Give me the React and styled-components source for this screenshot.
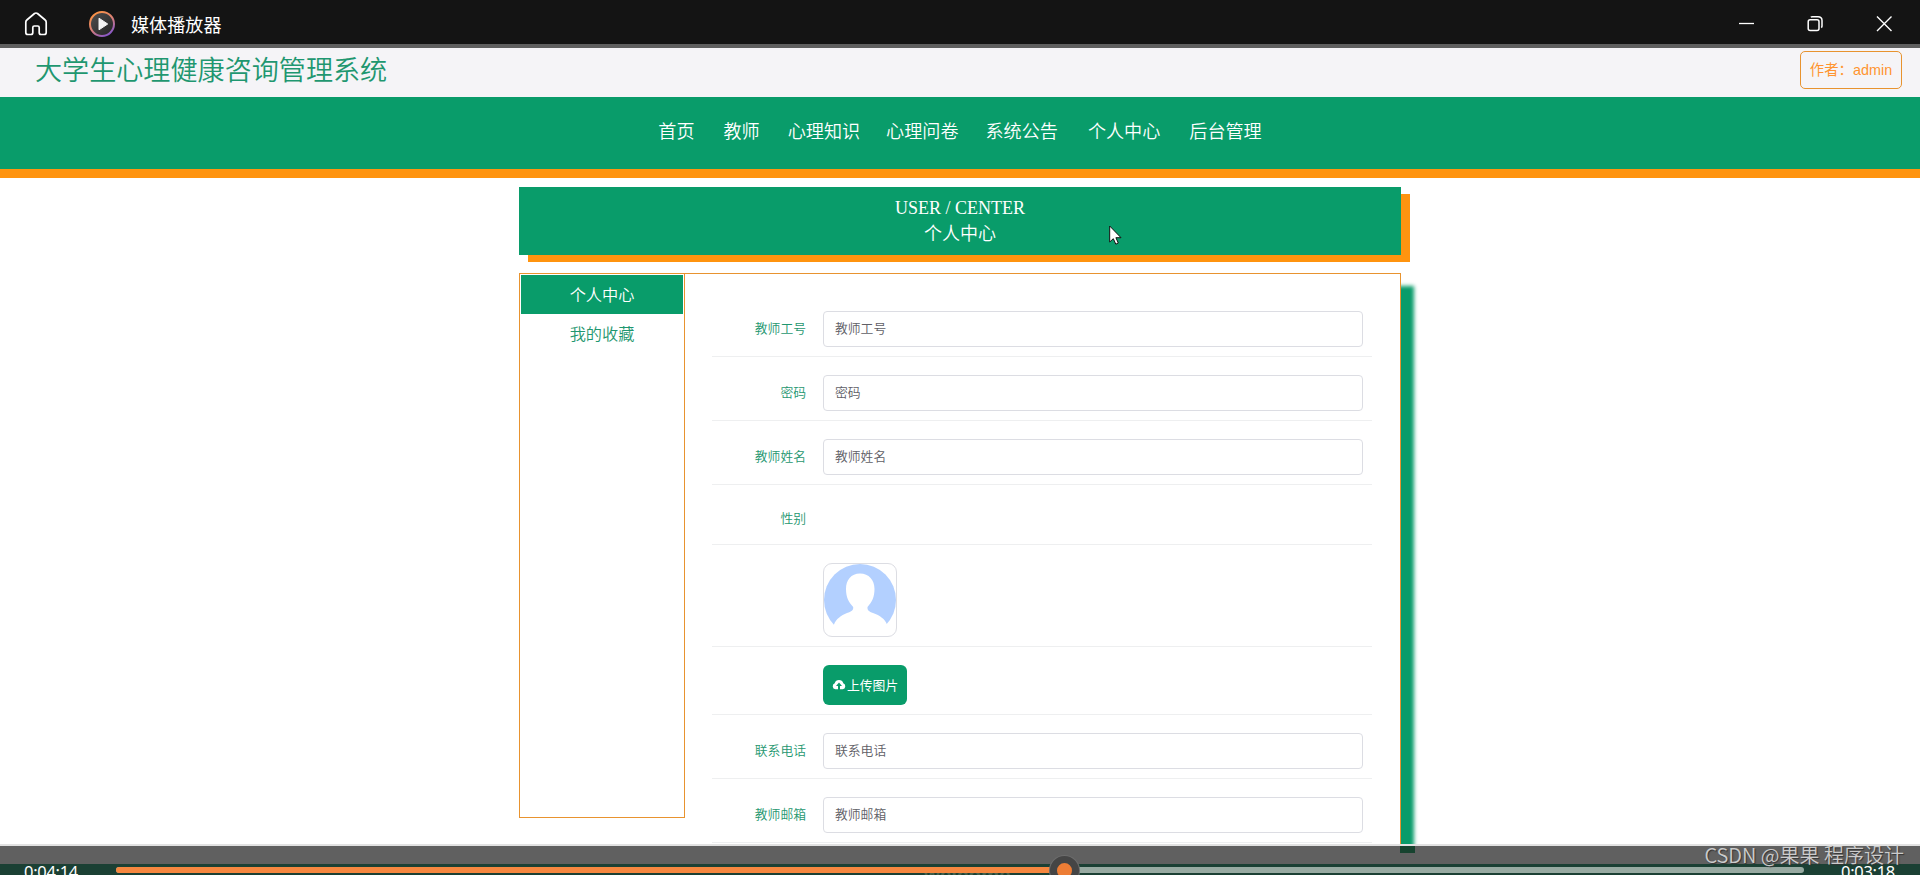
import React from 'react';
import styled, { createGlobalStyle } from 'styled-components';

const GREEN = '#099c6a';
const ORANGE = '#ff940f';
const LINE = '#e8932f';
const CJK = "'Noto Sans CJK SC', sans-serif";

const GlobalStyle = createGlobalStyle`
  * { box-sizing: border-box; }
  body {
    margin: 0;
    overflow: hidden;
    background: #fff;
    font-family: 'Liberation Sans', 'Noto Sans CJK SC', sans-serif;
  }
`;

const Screen = styled.div`
  position: relative;
  display: flex;
  flex-direction: column;
  height: 875px;
  overflow: hidden;
`;

const TitleBar = styled.header`
  flex: none;
  display: flex;
  align-items: center;
  height: 48px;
  padding: 0 16px 0 24px;
  background: #141414;
  border-bottom: 4px solid #5f5f5f;
  color: #fff;
`;

const AppName = styled.span`
  margin-left: 16px;
  padding-top: 3px;
  font: 400 18px/24px ${CJK};
  letter-spacing: 0.1px;
`;

const PlayerLogo = styled.svg`
  margin: 4px 0 0 41px;
`;

const HomeIcon = styled.svg`
  margin-top: 3px;
`;

const WindowControls = styled.div`
  display: flex;
  gap: 51px;
  margin: 3px 11px 0 auto;
`;

const SiteHeader = styled.div`
  flex: none;
  display: flex;
  justify-content: space-between;
  align-items: flex-start;
  height: 49px;
  padding: 3px 18px 0 35px;
  background: #f5f4f7;
`;

const SiteTitle = styled.h1`
  margin: 0;
  color: #1f9770;
  font: 350 27.1px/36px ${CJK};
`;

const Author = styled.div`
  width: 102px;
  height: 38px;
  border: 1px solid ${LINE};
  border-radius: 5px;
  color: #ff9430;
  font-size: 14.4px;
  line-height: 37px;
  text-align: center;
  white-space: nowrap;
`;

const Nav = styled.nav`
  flex: none;
  display: flex;
  justify-content: center;
  height: 81px;
  border-bottom: 9px solid ${ORANGE};
  background: ${GREEN};
`;

const NavItem = styled.a`
  margin-left: ${(p) => p.$gap}px;
  color: #fff;
  font: 350 18.1px/66px ${CJK};
`;

const Main = styled.main`
  flex: none;
  width: 882px;
  margin: 9px auto 0;
`;

const Banner = styled.div`
  height: 68px;
  padding-top: 9px;
  background: ${GREEN};
  box-shadow: 9px 7px 0 ${ORANGE};
  color: #fff;
  font: 18px/24px 'Liberation Serif', 'Noto Sans CJK SC', serif;
  text-align: center;
`;

const BannerLine = styled.div`
  font-weight: ${(p) => (p.$light ? 350 : 400)};
  font-family: ${(p) => (p.$light ? CJK : 'inherit')};
`;

const Panel = styled.section`
  display: flex;
  align-items: flex-start;
  height: 575px;
  margin-top: 18px;
  border: 1px solid ${LINE};
  border-left: 0;
  box-shadow: 13px 13px 4px ${GREEN};
  background: #fff;
`;

const Sidebar = styled.aside`
  width: 166px;
  height: 545px;
  margin-top: -1px;
  padding: 1px;
  border: 1px solid ${LINE};
`;

const SideItem = styled.div`
  height: 39px;
  background: ${(p) => (p.$active ? GREEN : 'transparent')};
  color: ${(p) => (p.$active ? '#fff' : '#1f9770')};
  font: 350 16.2px/38px ${CJK};
  text-align: center;
`;

const Form = styled.form`
  width: 660px;
  margin: 19px 0 0 27px;
`;

const Row = styled.div`
  display: flex;
  padding: 18px 0 9px;
  border-bottom: 1px solid #eeeff0;
`;

const Label = styled.label`
  width: 94px;
  height: 32px;
  margin-right: 17px;
  color: #1f9770;
  font: 350 12.8px/${(p) => (p.$raised ? 29 : 33)}px ${CJK};
  text-align: right;
`;

const Input = styled.input`
  width: 540px;
  height: 36px;
  padding: 0 11px 3px;
  border: 1px solid #dcdde3;
  border-radius: 4px;
  outline: none;
  font: 350 12.8px ${CJK};
  &::placeholder { color: #606066; opacity: 1; }
`;

const Avatar = styled.div`
  width: 74px;
  height: 74px;
  border: 1px solid #dcdde3;
  border-radius: 9px;
  overflow: hidden;
`;

const Upload = styled.button`
  display: flex;
  align-items: center;
  gap: 1px;
  width: 84px;
  height: 40px;
  padding: 0 0 2px 9px;
  border: 0;
  border-radius: 6px;
  background: ${GREEN};
  color: #fff;
  font: 400 12.8px ${CJK};
  white-space: nowrap;
`;

const Player = styled.footer`
  position: absolute;
  left: 0;
  right: 0;
  bottom: 0;
  height: 31px;
  border-top: 2px solid #e2e2e2;
  background: linear-gradient(#606060 18px, #1b4034 18px);
  overflow: hidden;
`;

const ShadowUnderlay = styled.div`
  position: absolute;
  left: 1400px;
  top: 0;
  width: 15px;
  height: 7px;
  background: #17432f;
`;

const Controls = styled.div`
  position: relative;
  display: flex;
  align-items: flex-start;
  padding: 14px 24px 0;
`;

const Time = styled.span`
  width: ${(p) => p.$width}px;
  color: #fff;
  font: 400 16.5px/24px 'Noto Sans', sans-serif;
  letter-spacing: -0.3px;
  white-space: nowrap;
`;

const Track = styled.div`
  position: relative;
  width: 1688px;
  height: 6px;
  margin: 7px 37px 0 0;
  border-radius: 3px;
  background: #98aaa2;
`;

const Played = styled.div`
  width: 948px;
  height: 6px;
  border-radius: 3px 0 0 3px;
  background: #f6873f;
`;

const Knob = styled.div`
  position: absolute;
  left: 933.5px;
  top: -11.5px;
  width: 29px;
  height: 29px;
  border: 7px solid #454545;
  border-radius: 50%;
  background: #ed7d35;
  box-shadow: 0 0 0 1px #6c6c6c;
`;

const Welcome = styled.div`
  position: absolute;
  left: 924px;
  top: 17px;
  color: #46604c;
  font: 700 20.5px/24px 'Liberation Sans', sans-serif;
`;

const Watermark = styled.div`
  position: absolute;
  right: 16px;
  top: 841px;
  color: #cbcbcb;
  font: 350 20px/28px ${CJK};
  text-shadow: 1px 1px 1px #333;
  white-space: nowrap;
`;

const Pointer = styled.svg`
  position: absolute;
  left: 1109px;
  top: 225px;
`;

const navItems = [
  ['首页', 0],
  ['教师', 29],
  ['心理知识', 28],
  ['心理问卷', 26],
  ['系统公告', 27],
  ['个人中心', 30],
  ['后台管理', 29],
];

const Field = ({ name }) => (
  <Row>
    <Label>{name}</Label>
    <Input placeholder={name} />
  </Row>
);

export default function App() {
  return (
    <Screen>
      <GlobalStyle />
      <TitleBar>
        <HomeIcon width="24" height="24" viewBox="0 0 24 24" fill="none" stroke="#fff" strokeWidth="1.7" strokeLinejoin="round">
          <path d="M1.8 10.2 Q1.8 8.8 2.8 8 L10.5 1.5 Q12 .5 13.5 1.5 L21.2 8 Q22.2 8.8 22.2 10.2 V20.5 Q22.2 22.5 20.2 22.5 H17 Q15.2 22.5 15.2 20.5 V15.5 Q15.2 14 13.7 14 H10.3 Q8.8 14 8.8 15.5 V20.5 Q8.8 22.5 7 22.5 H3.8 Q1.8 22.5 1.8 20.5Z" />
        </HomeIcon>
        <PlayerLogo width="26" height="26" viewBox="0 0 26 26">
          <defs>
            <linearGradient id="ring" x1="0.2" y1="0" x2="0.8" y2="1">
              <stop offset="0" stopColor="#ff9440" />
              <stop offset="0.5" stopColor="#d98078" />
              <stop offset="1" stopColor="#8054d0" />
            </linearGradient>
            <linearGradient id="disc" x1="0" y1="0" x2="1" y2="1">
              <stop offset="0" stopColor="#505050" />
              <stop offset="1" stopColor="#222" />
            </linearGradient>
          </defs>
          <circle cx="13" cy="13" r="12" fill="url(#disc)" stroke="url(#ring)" strokeWidth="2" />
          <path d="M10 7.2 L18.7 13 L10 18.8Z" fill="#f4f4f4" stroke="#f4f4f4" strokeLinejoin="round" />
        </PlayerLogo>
        <AppName>媒体播放器</AppName>
        <WindowControls>
          <svg width="18" height="18" fill="none" stroke="#fff" strokeWidth="1.3"><path d="M2 8.5h15" /></svg>
          <svg width="18" height="18" fill="none" stroke="#fff" strokeWidth="1.5">
            <rect x="2.2" y="4.7" width="10.8" height="10.8" rx="2" />
            <path d="M4.9 2.2 Q5.3 1.7 6.5 1.7 H12 Q16 1.7 16 5.5 V11 Q16 12 15.3 12.6" />
          </svg>
          <svg width="18" height="18" fill="none" stroke="#fff" strokeWidth="1.4"><path d="M2 1.5l14.5 14.5M16.5 1.5L2 16" /></svg>
        </WindowControls>
      </TitleBar>

      <SiteHeader>
        <SiteTitle>大学生心理健康咨询管理系统</SiteTitle>
        <Author>作者：admin</Author>
      </SiteHeader>

      <Nav>
        {navItems.map(([name, gap]) => (
          <NavItem key={name} $gap={gap}>{name}</NavItem>
        ))}
      </Nav>

      <Main>
        <Banner>
          <BannerLine>USER / CENTER</BannerLine>
          <BannerLine $light>个人中心</BannerLine>
        </Banner>
        <Panel>
          <Sidebar>
            <SideItem $active>个人中心</SideItem>
            <SideItem>我的收藏</SideItem>
          </Sidebar>
          <Form>
            <Field name="教师工号" />
            <Field name="密码" />
            <Field name="教师姓名" />
            <Row><Label $raised>性别</Label></Row>
            <Row>
              <Label />
              <Avatar>
                <svg width="72" height="72" viewBox="0 0 72 72">
                  <circle cx="36" cy="36" r="36" fill="#b3d0ff" />
                  <path d="M36 9.5 C45 9.5 50.5 16 50.5 25 C50.5 33 48 38 43.5 43 C43.2 46.5 45 47.5 49 49 C56 51.5 61 55 63 60.5 V72 H10 V60.5 C12 55 17 51.5 23 49 C27.5 47.5 29.5 46.5 29.2 43 C24.5 38 22 33 22 25 C22 16 27 9.5 36 9.5Z" fill="#fff" />
                </svg>
              </Avatar>
            </Row>
            <Row>
              <Label />
              <Upload type="button">
                <svg width="14" height="11" viewBox="0 0 14 11">
                  <path d="M3.3 10.3 A3.2 3.2 0 0 1 2.7 4.2 A4.5 4.5 0 0 1 11.3 4.2 A3.2 3.2 0 0 1 10.7 10.3 H8 V7 H10 L7 3.6 L4 7 H6 V10.3Z" fill="#fff" />
                </svg>
                上传图片
              </Upload>
            </Row>
            <Field name="联系电话" />
            <Field name="教师邮箱" />
          </Form>
        </Panel>
      </Main>

      <Pointer width="14" height="21" viewBox="0 0 14 21">
        <path d="M.7 1 V17 L4.3 13.7 L6.8 19.2 L9.3 18 L6.9 12.7 H12Z" fill="#fff" stroke="#111" strokeWidth="1" />
      </Pointer>

      <Player>
        <ShadowUnderlay />
        <Welcome>welcome</Welcome>
        <Controls>
          <Time $width={92}>0:04:14</Time>
          <Track>
            <Played />
            <Knob />
          </Track>
          <Time $width={55}>0:03:18</Time>
        </Controls>
      </Player>
      <Watermark>CSDN @果果 程序设计</Watermark>
    </Screen>
  );
}
